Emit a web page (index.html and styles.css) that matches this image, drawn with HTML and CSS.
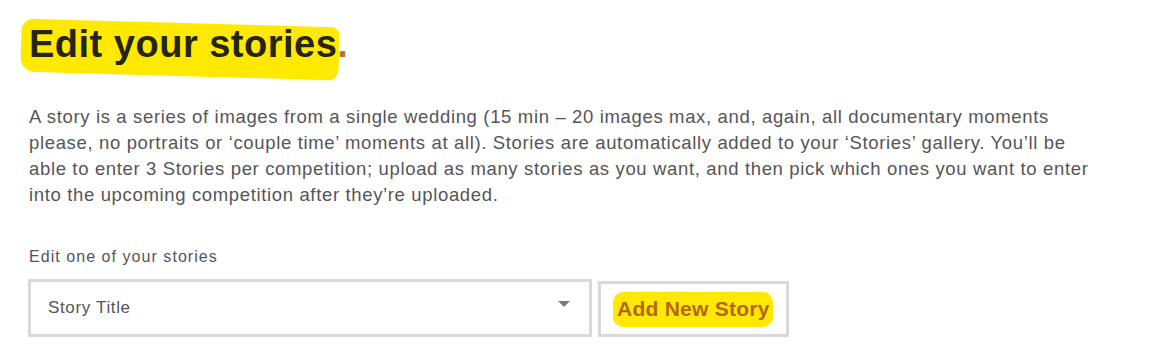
FILE: index.html
```html
<!DOCTYPE html>
<html lang="en">
<head>
<meta charset="utf-8">
<title>Edit your stories</title>
<link rel="stylesheet" href="styles.css">
</head>
<body>
<main class="page">
  <h1 class="title"><span class="title-hl">Edit your stories</span><span class="dot">.</span></h1>
  <p class="intro">A story is a series of images from a single wedding (15 min – 20 images max, and, again, all documentary moments please, no portraits or ‘couple time’ moments at all). Stories are automatically added to your ‘Stories’ gallery. You’ll be able to enter 3 Stories per competition; upload as many stories as you want, and then pick which ones you want to enter into the upcoming competition after they’re uploaded.</p>
  <div class="label">Edit one of your stories</div>
  <div class="controls">
    <div class="select">
      <span class="select-text">Story Title</span>
      <span class="caret"></span>
    </div>
    <button class="add-btn" type="button"><span class="add-hl">Add New Story</span></button>
  </div>
</main>
</body>
</html>
```
FILE: styles.css
```css
html, body {
  margin: 0;
  padding: 0;
  background: #ffffff;
}
body {
  font-family: "Liberation Sans", Arial, sans-serif;
}
.page {
  padding: 22px 0 0 29px;
  width: 1100px;
}
.title {
  margin: 0;
  font-size: 38px;
  line-height: 45px;
  font-weight: 700;
  color: #26250f;
  letter-spacing: 0.5px;
}
.title-hl {
  position: relative;
  display: inline-block;
  z-index: 0;
}
.title-hl::before {
  content: "";
  position: absolute;
  left: -8px;
  right: -2px;
  top: 1px;
  bottom: -9px;
  background: #ffe900;
  border-radius: 12px 8px 10px 14px;
  transform: rotate(1.6deg);
  z-index: -1;
}
.dot {
  color: #b8732b;
}
.intro {
  margin: 37px 0 0 0;
  font-size: 18.5px;
  line-height: 26px;
  color: #555558;
  letter-spacing: 0.65px;
  width: 1078px;
}
.label {
  margin-top: 39px;
  font-size: 16px;
  line-height: 20px;
  color: #555558;
  letter-spacing: 1.05px;
}
.controls {
  display: flex;
  align-items: flex-start;
  gap: 6px;
  margin-top: 12px;
  margin-left: -1px;
}
.select {
  box-sizing: border-box;
  width: 564px;
  height: 58px;
  border: 3px solid #d9d9d9;
  display: flex;
  align-items: center;
  justify-content: space-between;
  padding: 0 19px 0 17px;
  background: #fff;
}
.select-text {
  font-size: 17px;
  color: #555558;
  letter-spacing: 0.65px;
}
.caret {
  width: 0;
  height: 0;
  border-left: 6px solid transparent;
  border-right: 6px solid transparent;
  border-top: 6px solid #7a7a7a;
  margin-top: -8px;
}
.add-btn {
  box-sizing: border-box;
  margin-top: 2px;
  width: 191px;
  height: 56px;
  border: 3px solid #d9d9d9;
  background: #fff;
  padding: 0 0 0 12px;
  display: flex;
  align-items: center;
  font-family: "Liberation Sans", Arial, sans-serif;
  cursor: pointer;
}
.add-hl {
  background: #ffe900;
  color: #b3661c;
  font-size: 21px;
  font-weight: 700;
  line-height: 24px;
  letter-spacing: 0.25px;
  padding: 5px 3px 6px 4px;
  border-radius: 10px;
}
```
